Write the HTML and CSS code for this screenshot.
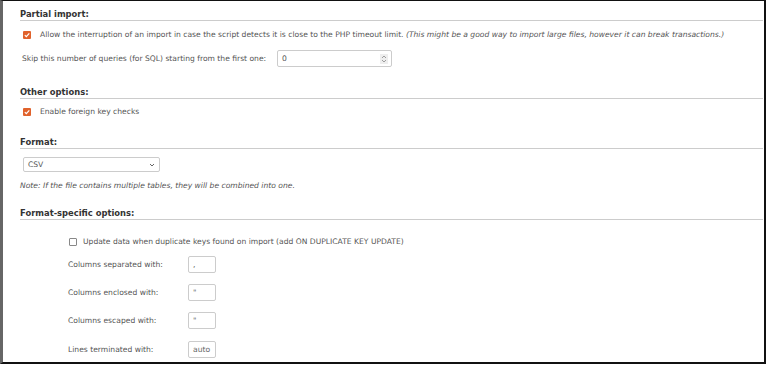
FILE: index.html
```html
<!DOCTYPE html>
<html>
<head>
<meta charset="utf-8">
<link rel="stylesheet" href="styles.css">
</head>
<body>
<div class="frame">
  <div class="section">
    <div class="heading">Partial import:</div>
    <div class="row r-allow">
      <span class="cb checked"><svg viewBox="0 0 8 8" width="8" height="8"><path d="M1.8 4.2 L3.3 5.7 L6.3 2.3" fill="none" stroke="#fff" stroke-width="1.2"/></svg></span>
      <span class="txt">Allow the interruption of an import in case the script detects it is close to the PHP timeout limit. <i>(This might be a good way to import large files, however it can break transactions.)</i></span>
    </div>
    <div class="row r-skip">
      <span class="txt skip-label">Skip this number of queries (for SQL) starting from the first one:</span>
      <span class="numinput"><span class="val">0</span><span class="spin"><svg viewBox="0 0 8 10" width="8" height="10"><path d="M2 4 L4 2 L6 4 M2 6 L4 8 L6 6" fill="none" stroke="#888" stroke-width="0.8"/></svg></span></span>
    </div>
  </div>

  <div class="section s-other">
    <div class="heading">Other options:</div>
    <div class="row r-fk">
      <span class="cb checked"><svg viewBox="0 0 8 8" width="8" height="8"><path d="M1.8 4.2 L3.3 5.7 L6.3 2.3" fill="none" stroke="#fff" stroke-width="1.2"/></svg></span>
      <span class="txt">Enable foreign key checks</span>
    </div>
  </div>

  <div class="section s-format">
    <div class="heading">Format:</div>
    <div class="select"><span class="val">CSV</span><svg viewBox="0 0 8 6" width="8" height="6"><path d="M2 2 L4 4 L6 2" fill="none" stroke="#666" stroke-width="1"/></svg></div>
    <div class="note"><i>Note: If the file contains multiple tables, they will be combined into one.</i></div>
  </div>

  <div class="section s-specific">
    <div class="heading">Format-specific options:</div>
    <div class="opts">
      <div class="row r-dup">
        <span class="cb"></span>
        <span class="txt">Update data when duplicate keys found on import (add ON DUPLICATE KEY UPDATE)</span>
      </div>
      <div class="pair p-first"><span class="txt lbl">Columns separated with:</span><span class="small-in">,</span></div>
      <div class="pair"><span class="txt lbl">Columns enclosed with:</span><span class="small-in">"</span></div>
      <div class="pair"><span class="txt lbl">Columns escaped with:</span><span class="small-in">"</span></div>
      <div class="pair p-last"><span class="txt lbl">Lines terminated with:</span><span class="small-in">auto</span></div>
    </div>
  </div>
</div>
</body>
</html>
```

FILE: styles.css
```css
html, body {
  margin: 0;
  padding: 0;
  background: #fff;
}
body {
  font-family: "DejaVu Sans", "Noto Sans", sans-serif;
  color: #555;
  font-size: 7.6px;
}
.frame {
  box-sizing: border-box;
  width: 766px;
  height: 364px;
  border-top: 1px solid #111;
  border-left: 3px solid #666;
  border-right: 2px solid #111;
  border-bottom: 2px solid #111;
  padding: 7px 1px 0 17px;
  overflow: hidden;
}
.heading {
  font-weight: bold;
  font-size: 8.4px;
  line-height: 12px;
  color: #333;
  border-bottom: 1px solid #ccc;
}
.row {
  display: flex;
  align-items: center;
}
.txt {
  line-height: 12px;
  white-space: nowrap;
}
.cb {
  box-sizing: border-box;
  width: 8px;
  height: 8px;
  border: 1px solid #888;
  border-radius: 1px;
  background: #fff;
  display: inline-flex;
  margin-right: 9px;
  flex: none;
}
.cb.checked {
  border: none;
  background: #e0622c;
}
.cb svg { display: block; }
.r-allow {
  margin-top: 8px;
  padding-left: 3px;
}
.r-skip {
  margin-top: 9px;
  padding-left: 2px;
}
.skip-label {
  width: 255px;
}
.numinput {
  box-sizing: border-box;
  width: 115px;
  height: 17px;
  border: 1px solid #ccc;
  border-radius: 2px;
  display: flex;
  align-items: center;
  justify-content: space-between;
  padding: 0 3px 0 4px;
}
.spin {
  width: 8px;
  height: 10px;
  background: #eee;
  display: flex;
}
.s-other { margin-top: 19px; }
.r-fk {
  margin-top: 7px;
  padding-left: 3px;
}
.s-format { margin-top: 18px; }
.select {
  box-sizing: border-box;
  margin-top: 8px;
  margin-left: 3px;
  width: 137px;
  height: 15px;
  border: 1px solid #ccc;
  border-radius: 2px;
  display: flex;
  align-items: center;
  justify-content: space-between;
  padding: 0 3px 0 4px;
}
.note {
  margin-top: 8px;
  line-height: 12px;
}
.s-specific { margin-top: 15px; }
.opts {
  padding-left: 48px;
}
.r-dup {
  margin-top: 16px;
  padding-left: 1px;
}
.r-dup .cb { margin-right: 6px; }
.pair {
  display: flex;
  align-items: center;
  margin-top: 11px;
}
.p-first { margin-top: 8px; }
.p-last { margin-top: 12px; }
.lbl {
  width: 120px;
}
.small-in {
  box-sizing: border-box;
  width: 28px;
  height: 17px;
  border: 1px solid #ccc;
  border-radius: 2px;
  display: flex;
  align-items: center;
  padding-left: 4px;
  color: #666;
}
```
